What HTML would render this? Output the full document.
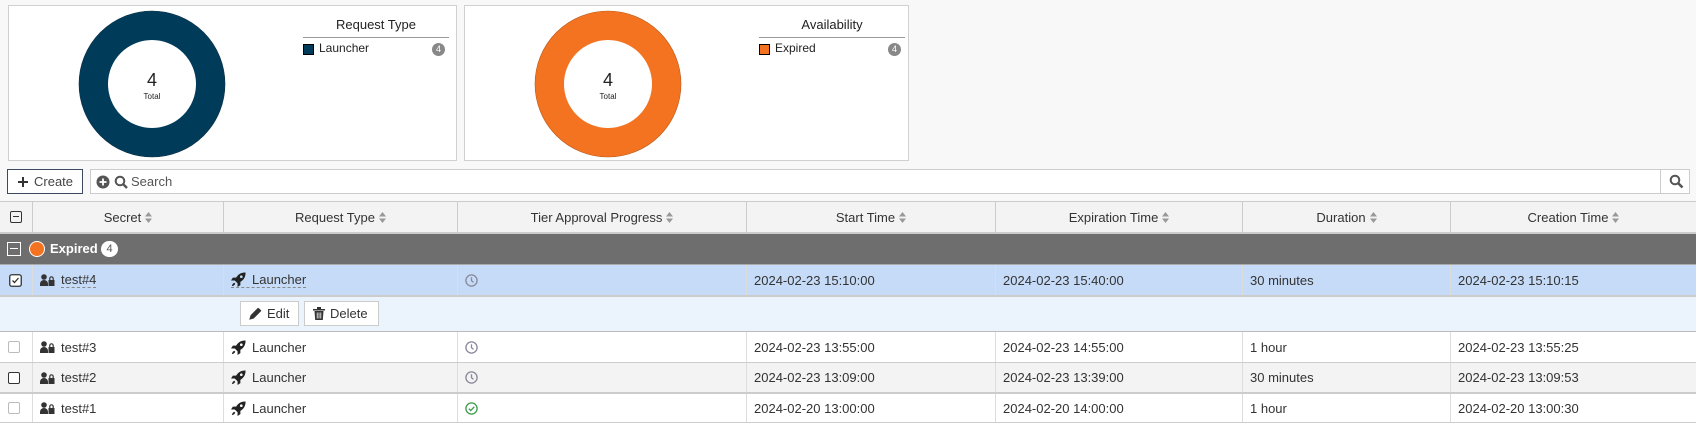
<!DOCTYPE html>
<html><head><meta charset="utf-8"><style>
*{box-sizing:border-box;margin:0;padding:0}
body{width:1696px;height:428px;background:#f8f8f8;font-family:"Liberation Sans",sans-serif;font-size:13px;color:#333;position:relative;overflow:hidden}
.a{position:absolute}
.panel{position:absolute;top:5px;height:156px;background:#fff;border:1px solid #d0d0d0}
.row{position:absolute;left:0;width:1696px;border-bottom:1px solid #ccc}
.c{position:absolute;top:0;bottom:0;border-left:1px solid #ddd;display:flex;align-items:center;padding-left:7px;white-space:nowrap}
.h .c{justify-content:center;padding-left:0;border-left:1px solid #ccc;color:#333}
.srt{display:inline-block;width:7px;height:11px;margin-left:4px;vertical-align:middle}
.cb{width:12px;height:12px;border:1px solid #bbb;background:#fff;border-radius:2px}
.ic{display:inline-block;vertical-align:middle;margin-right:6px;flex:none}
.dash{border-bottom:1px dashed #888;line-height:14px}
.btn{position:absolute;height:25px;border:1px solid #ccc;background:#fff;display:flex;align-items:center;padding-left:8px;font-size:13px}
</style></head><body>
<div class="panel" style="left:8px;width:449px">
 <svg class="a" style="left:69px;top:4px" width="148" height="148"><circle cx="74" cy="74" r="58.5" fill="none" stroke="#003b5a" stroke-width="29"/><circle cx="74" cy="74" r="73" fill="none" stroke="#0f3147" stroke-width=".6"/></svg>
 <div class="a" style="left:125px;top:64px;width:36px;text-align:center;font-size:18px;color:#222">4</div>
 <div class="a" style="left:125px;top:86px;width:36px;text-align:center;font-size:8px;color:#222">Total</div>
 <div class="a" style="left:294px;top:11px;width:146px;text-align:center;font-size:13px;color:#222">Request Type</div>
 <div class="a" style="left:294px;top:31px;width:146px;border-top:1px solid #999"></div>
 <div class="a" style="left:294px;top:38px;width:11px;height:11px;background:#003b5a;border:1px solid #000"></div>
 <div class="a" style="left:310px;top:35px;font-size:12px;color:#222">Launcher</div>
 <div class="a" style="left:423px;top:37px;width:13px;height:13px;border-radius:50%;background:#888;color:#fff;font-size:9px;text-align:center;line-height:13px">4</div>
</div>
<div class="panel" style="left:464px;width:445px">
 <svg class="a" style="left:69px;top:4px" width="148" height="148"><circle cx="74" cy="74" r="58.5" fill="none" stroke="#f37320" stroke-width="29"/><circle cx="74" cy="74" r="73" fill="none" stroke="#b85a1c" stroke-width=".6"/></svg>
 <div class="a" style="left:125px;top:64px;width:36px;text-align:center;font-size:18px;color:#222">4</div>
 <div class="a" style="left:125px;top:86px;width:36px;text-align:center;font-size:8px;color:#222">Total</div>
 <div class="a" style="left:294px;top:11px;width:146px;text-align:center;font-size:13px;color:#222">Availability</div>
 <div class="a" style="left:294px;top:31px;width:146px;border-top:1px solid #999"></div>
 <div class="a" style="left:294px;top:38px;width:11px;height:11px;background:#f37320;border:1px solid #000"></div>
 <div class="a" style="left:310px;top:35px;font-size:12px;color:#222">Expired</div>
 <div class="a" style="left:423px;top:37px;width:13px;height:13px;border-radius:50%;background:#888;color:#fff;font-size:9px;text-align:center;line-height:13px">4</div>
</div>
<div class="a" style="left:7px;top:169px;width:76px;height:25px;border:1px solid #3b4a5e;background:#fff;display:flex;align-items:center;padding-left:9px;font-size:13px;color:#444">
 <svg width="12" height="12" style="margin-right:5px"><path d="M6 1v10M1 6h10" stroke="#333" stroke-width="2"/></svg>Create</div>
<div class="a" style="left:90px;top:169px;width:1600px;height:25px;border:1px solid #ccc;background:#fff">
 <svg class="a" style="left:5px;top:5px" width="14" height="14"><circle cx="7" cy="7" r="6.5" fill="#555"/><path d="M7 3.5v7M3.5 7h7" stroke="#fff" stroke-width="1.8"/></svg>
 <svg class="a" style="left:23px;top:5px" width="14" height="14"><circle cx="6" cy="6" r="4.3" fill="none" stroke="#555" stroke-width="2"/><path d="M9 9l4 4" stroke="#555" stroke-width="2.4"/></svg>
 <div class="a" style="left:40px;top:4px;color:#555;font-size:13px">Search</div>
 <div class="a" style="left:1569px;top:-1px;width:31px;height:25px;border-left:1px solid #ccc">
  <svg class="a" style="left:8px;top:5px" width="15" height="15"><circle cx="6" cy="6" r="4.3" fill="none" stroke="#555" stroke-width="2"/><path d="M9 9l4.5 4.5" stroke="#555" stroke-width="2.6"/></svg></div>
</div>
<div class="a" style="left:0;top:201px;width:1696px;height:227px;background:#fff;border-top:1px solid #ccc"></div>
<div class="row h" style="top:202px;height:32px;background:#f3f3f3;border-bottom:2px solid #ccc">
 <div class="c" style="left:0;width:32px;border-left:none"><div style="width:12px;height:12px;border:1.5px solid #333;border-radius:2px;position:relative"><div style="position:absolute;left:2px;right:2px;top:4px;border-top:1.5px solid #333"></div></div></div>
 <div class="c" style="left:32px;width:191px">Secret<svg class="srt" viewBox="0 0 7 11"><path d="M0 4.5L3.5 0 7 4.5zM0 6.5L3.5 11 7 6.5z" fill="#999"/></svg></div>
 <div class="c" style="left:223px;width:234px">Request Type<svg class="srt" viewBox="0 0 7 11"><path d="M0 4.5L3.5 0 7 4.5zM0 6.5L3.5 11 7 6.5z" fill="#999"/></svg></div>
 <div class="c" style="left:457px;width:289px">Tier Approval Progress<svg class="srt" viewBox="0 0 7 11"><path d="M0 4.5L3.5 0 7 4.5zM0 6.5L3.5 11 7 6.5z" fill="#999"/></svg></div>
 <div class="c" style="left:746px;width:249px">Start Time<svg class="srt" viewBox="0 0 7 11"><path d="M0 4.5L3.5 0 7 4.5zM0 6.5L3.5 11 7 6.5z" fill="#999"/></svg></div>
 <div class="c" style="left:995px;width:247px">Expiration Time<svg class="srt" viewBox="0 0 7 11"><path d="M0 4.5L3.5 0 7 4.5zM0 6.5L3.5 11 7 6.5z" fill="#999"/></svg></div>
 <div class="c" style="left:1242px;width:208px">Duration<svg class="srt" viewBox="0 0 7 11"><path d="M0 4.5L3.5 0 7 4.5zM0 6.5L3.5 11 7 6.5z" fill="#999"/></svg></div>
 <div class="c" style="left:1450px;width:246px">Creation Time<svg class="srt" viewBox="0 0 7 11"><path d="M0 4.5L3.5 0 7 4.5zM0 6.5L3.5 11 7 6.5z" fill="#999"/></svg></div>
</div>
<div class="row" style="top:234px;height:31px;background:#6e6e6e;border-bottom:1px solid #aaa">
 <div class="a" style="left:7px;top:8px;width:14px;height:14px;border:1.5px solid #fff;background:#6e6e6e"><div style="position:absolute;left:2px;right:2px;top:5px;border-top:1.5px solid #fff"></div></div>
 <div class="a" style="left:29px;top:7px;width:16px;height:16px;border-radius:50%;background:#f37320;border:1.5px solid #fff"></div>
 <div class="a" style="left:50px;top:7px;color:#fff;font-weight:bold;font-size:13px">Expired</div>
 <div class="a" style="left:101px;top:7px;width:17px;height:16px;border-radius:8px;background:#fff;color:#555;font-size:11px;text-align:center;line-height:16px">4</div>
</div>
<div class="row" style="top:265px;height:32px;background:#c6dbf7;border-bottom:2px solid #ccc">
 <div class="c" style="left:0;width:32px;border-left:none;padding-left:9px"><svg width="13" height="13"><rect x=".75" y=".75" width="11.5" height="11.5" rx="2" fill="#fff" stroke="#333" stroke-width="1.3"/><path d="M3.5 6.5l2 2 4-4.5" fill="none" stroke="#333" stroke-width="1.3"/></svg></div>
 <div class="c" style="left:32px;width:191px"><svg class="ic" width="15" height="12" viewBox="0 0 15 12"><circle cx="4" cy="3" r="2.8" fill="#333"/><path d="M0 12v-2a4 4 0 0 1 8 0v2z" fill="#333"/><rect x="8.5" y="6" width="6" height="6" fill="#333"/><path d="M9.8 6.5V4.5a1.7 1.7 0 0 1 3.4 0v2" fill="none" stroke="#333" stroke-width="1.2"/></svg><span class="dash">test#4</span></div>
 <div class="c" style="left:223px;width:234px"><span class="dash" style="display:flex;align-items:center"><svg class="ic" width="15" height="15" viewBox="0 0 16 16"><path d="M15.5.5C11 .3 7.5 2.5 5.5 6H2L0 9h4l3 3v4l3-2v-3.5c3.5-2 5.7-5.5 5.5-10zM3.5 11.5C2 12 1 14 1 15c1 0 3-1 3.5-2.5z" fill="#222"/><circle cx="11" cy="5" r="1.4" fill="#c6dbf7"/></svg>Launcher</span></div>
 <div class="c" style="left:457px;width:289px"><svg class="ic" width="13" height="13"><circle cx="6.5" cy="6.5" r="5.6" fill="none" stroke="#889" stroke-width="1.3"/><path d="M6.5 3.3v3.4l2 1.7" fill="none" stroke="#889" stroke-width="1.3"/></svg></div>
 <div class="c" style="left:746px;width:249px">2024-02-23 15:10:00</div>
 <div class="c" style="left:995px;width:247px">2024-02-23 15:40:00</div>
 <div class="c" style="left:1242px;width:208px">30 minutes</div>
 <div class="c" style="left:1450px;width:246px">2024-02-23 15:10:15</div>
</div>
<div class="row" style="top:297px;height:35px;background:#ebf3fd;border-bottom:1px solid #bbb">
 <div class="btn" style="left:240px;top:4px;width:59px"><svg width="13" height="13" style="margin-right:5px"><path d="M1 12l1-3.5 7-7 2.5 2.5-7 7zM9.5 1.5l2.5 2.5" fill="#333" stroke="#333"/></svg>Edit</div>
 <div class="btn" style="left:304px;top:4px;width:75px"><svg width="12" height="13" style="margin-right:5px"><path d="M0 2h12v1.5H0zM4 0h4v2H4zM1.5 4h9l-.7 9H2.2z" fill="#333"/><path d="M4.2 5.5v6M6 5.5v6M7.8 5.5v6" stroke="#fff" stroke-width=".8"/></svg>Delete</div>
</div>
<div class="row" style="top:332px;height:31px;background:#fff">
 <div class="c" style="left:0;width:32px;border-left:none;padding-left:8px"><div class="cb"></div></div>
 <div class="c" style="left:32px;width:191px"><svg class="ic" width="15" height="12" viewBox="0 0 15 12"><circle cx="4" cy="3" r="2.8" fill="#333"/><path d="M0 12v-2a4 4 0 0 1 8 0v2z" fill="#333"/><rect x="8.5" y="6" width="6" height="6" fill="#333"/><path d="M9.8 6.5V4.5a1.7 1.7 0 0 1 3.4 0v2" fill="none" stroke="#333" stroke-width="1.2"/></svg>test#3</div>
 <div class="c" style="left:223px;width:234px"><svg class="ic" width="15" height="15" viewBox="0 0 16 16"><path d="M15.5.5C11 .3 7.5 2.5 5.5 6H2L0 9h4l3 3v4l3-2v-3.5c3.5-2 5.7-5.5 5.5-10zM3.5 11.5C2 12 1 14 1 15c1 0 3-1 3.5-2.5z" fill="#222"/><circle cx="11" cy="5" r="1.4" fill="#fff"/></svg>Launcher</div>
 <div class="c" style="left:457px;width:289px"><svg class="ic" width="13" height="13"><circle cx="6.5" cy="6.5" r="5.6" fill="none" stroke="#889" stroke-width="1.3"/><path d="M6.5 3.3v3.4l2 1.7" fill="none" stroke="#889" stroke-width="1.3"/></svg></div>
 <div class="c" style="left:746px;width:249px">2024-02-23 13:55:00</div>
 <div class="c" style="left:995px;width:247px">2024-02-23 14:55:00</div>
 <div class="c" style="left:1242px;width:208px">1 hour</div>
 <div class="c" style="left:1450px;width:246px">2024-02-23 13:55:25</div>
</div>
<div class="row" style="top:363px;height:31px;background:#f3f3f3;border-bottom:2px solid #ccc">
 <div class="c" style="left:0;width:32px;border-left:none;padding-left:8px"><div class="cb" style="border:1.5px solid #333"></div></div>
 <div class="c" style="left:32px;width:191px"><svg class="ic" width="15" height="12" viewBox="0 0 15 12"><circle cx="4" cy="3" r="2.8" fill="#333"/><path d="M0 12v-2a4 4 0 0 1 8 0v2z" fill="#333"/><rect x="8.5" y="6" width="6" height="6" fill="#333"/><path d="M9.8 6.5V4.5a1.7 1.7 0 0 1 3.4 0v2" fill="none" stroke="#333" stroke-width="1.2"/></svg>test#2</div>
 <div class="c" style="left:223px;width:234px"><svg class="ic" width="15" height="15" viewBox="0 0 16 16"><path d="M15.5.5C11 .3 7.5 2.5 5.5 6H2L0 9h4l3 3v4l3-2v-3.5c3.5-2 5.7-5.5 5.5-10zM3.5 11.5C2 12 1 14 1 15c1 0 3-1 3.5-2.5z" fill="#222"/><circle cx="11" cy="5" r="1.4" fill="#f3f3f3"/></svg>Launcher</div>
 <div class="c" style="left:457px;width:289px"><svg class="ic" width="13" height="13"><circle cx="6.5" cy="6.5" r="5.6" fill="none" stroke="#889" stroke-width="1.3"/><path d="M6.5 3.3v3.4l2 1.7" fill="none" stroke="#889" stroke-width="1.3"/></svg></div>
 <div class="c" style="left:746px;width:249px">2024-02-23 13:09:00</div>
 <div class="c" style="left:995px;width:247px">2024-02-23 13:39:00</div>
 <div class="c" style="left:1242px;width:208px">30 minutes</div>
 <div class="c" style="left:1450px;width:246px">2024-02-23 13:09:53</div>
</div>
<div class="row" style="top:394px;height:29px;background:#fff">
 <div class="c" style="left:0;width:32px;border-left:none;padding-left:8px"><div class="cb"></div></div>
 <div class="c" style="left:32px;width:191px"><svg class="ic" width="15" height="12" viewBox="0 0 15 12"><circle cx="4" cy="3" r="2.8" fill="#333"/><path d="M0 12v-2a4 4 0 0 1 8 0v2z" fill="#333"/><rect x="8.5" y="6" width="6" height="6" fill="#333"/><path d="M9.8 6.5V4.5a1.7 1.7 0 0 1 3.4 0v2" fill="none" stroke="#333" stroke-width="1.2"/></svg>test#1</div>
 <div class="c" style="left:223px;width:234px"><svg class="ic" width="15" height="15" viewBox="0 0 16 16"><path d="M15.5.5C11 .3 7.5 2.5 5.5 6H2L0 9h4l3 3v4l3-2v-3.5c3.5-2 5.7-5.5 5.5-10zM3.5 11.5C2 12 1 14 1 15c1 0 3-1 3.5-2.5z" fill="#222"/><circle cx="11" cy="5" r="1.4" fill="#fff"/></svg>Launcher</div>
 <div class="c" style="left:457px;width:289px"><svg class="ic" width="13" height="13"><circle cx="6.5" cy="6.5" r="5.6" fill="none" stroke="#3a9a4a" stroke-width="1.3"/><path d="M3.8 6.7l1.9 1.9 3.6-3.8" fill="none" stroke="#3a9a4a" stroke-width="1.3"/></svg></div>
 <div class="c" style="left:746px;width:249px">2024-02-20 13:00:00</div>
 <div class="c" style="left:995px;width:247px">2024-02-20 14:00:00</div>
 <div class="c" style="left:1242px;width:208px">1 hour</div>
 <div class="c" style="left:1450px;width:246px">2024-02-20 13:00:30</div>
</div>
</body></html>
